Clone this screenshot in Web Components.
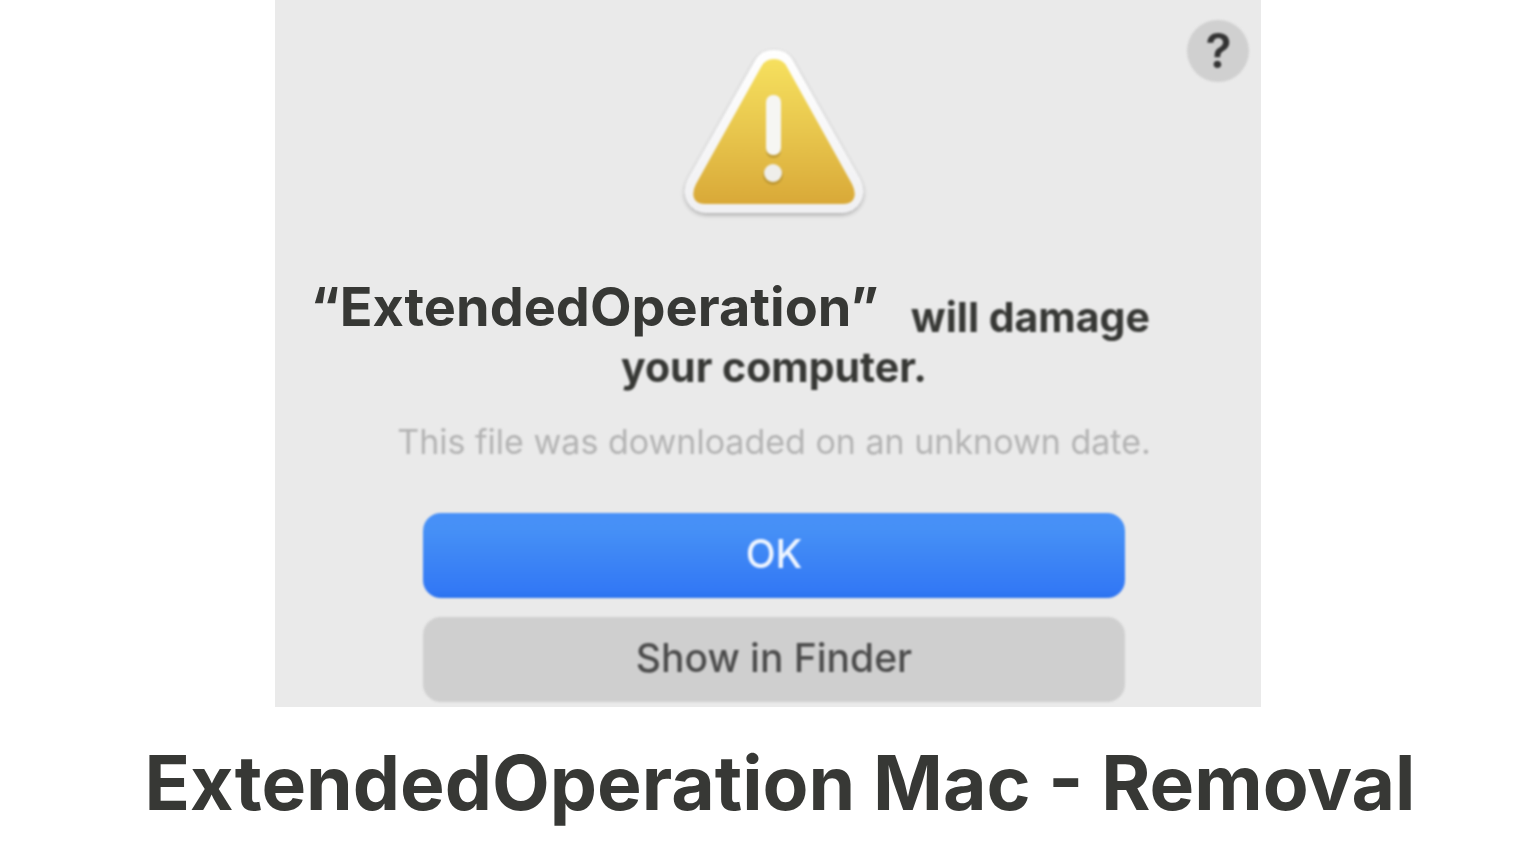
<!DOCTYPE html>
<html lang="en">
<head>
<meta charset="utf-8">
<meta name="viewport" content="width=device-width, initial-scale=1">
<title>ExtendedOperation Mac - Removal</title>
<style>
  body {
    margin: 0;
    background: #fff;
    color: #373835;
    font-family: Inter, "Liberation Sans", sans-serif;
  }
</style>
</head>
<body>
<removal-cover>
  <mac-alert slot="picture">
    <span slot="name">“ExtendedOperation”</span>
    <span slot="claim">will damage</span>
    <span slot="claim-end">your computer.</span>
    <span slot="detail">This file was downloaded on an unknown date.</span>
    <push-button slot="actions" primary>OK</push-button>
    <push-button slot="actions">Show in Finder</push-button>
  </mac-alert>
  ExtendedOperation Mac - Removal
</removal-cover>

<script>
class RemovalCover extends HTMLElement {
  constructor() {
    super();
    this.attachShadow({ mode: 'open' }).innerHTML = `
      <style>
        :host {
          display: flex;
          flex-direction: column;
          align-items: center;
        }
        ::slotted(mac-alert) {
          width: 64.25%;
        }
        h1 {
          margin: 0;
          padding: 28px 0 0 24px;
          font-size: 75px;
          line-height: 96px;
          font-weight: 700;
          white-space: nowrap;
        }
      </style>
      <slot name="picture"></slot>
      <h1><slot></slot></h1>
    `;
  }
}

class MacAlert extends HTMLElement {
  constructor() {
    super();
    this.attachShadow({ mode: 'open' }).innerHTML = `
      <style>
        :host {
          display: flex;
          flex-direction: column;
          align-items: center;
          position: relative;
          box-sizing: border-box;
          padding: 45px 0 5px 12px;
          background: #eaeaea;
        }
        help-button {
          position: absolute;
          top: 20px;
          right: 12px;
        }
        h2 {
          display: flex;
          flex-direction: column;
          align-self: stretch;
          margin: 51px 0 0;
          font-size: 41px;
          line-height: 50px;
          font-weight: 700;
          white-space: nowrap;
        }
        .first {
          display: flex;
          align-items: flex-end;
          gap: 32px;
          padding-left: 24px;
        }
        .name {
          font-size: 54px;
          line-height: 70px;
        }
        .last {
          align-self: center;
        }
        .soft {
          filter: blur(1px);
        }
        p {
          margin: 26px 0 0;
          color: #b3b3b3;
          font-size: 34px;
          line-height: 48px;
          white-space: nowrap;
        }
        .actions {
          display: flex;
          flex-direction: column;
          gap: 19px;
          width: 72%;
          margin-top: 47px;
        }
      </style>
      <help-button></help-button>
      <warning-icon></warning-icon>
      <h2>
        <span class="first">
          <span class="name"><slot name="name"></slot></span>
          <span class="soft"><slot name="claim"></slot></span>
        </span>
        <span class="last soft"><slot name="claim-end"></slot></span>
      </h2>
      <p class="soft"><slot name="detail"></slot></p>
      <div class="actions"><slot name="actions"></slot></div>
    `;
  }
}

class WarningIcon extends HTMLElement {
  constructor() {
    super();
    this.attachShadow({ mode: 'open' }).innerHTML = `
      <style>
        :host { display: block; }
        svg {
          display: block;
          filter: blur(1px);
        }
      </style>
      <svg width="190" height="176" viewBox="0 0 190 176" role="img" aria-label="Warning">
        <defs>
          <linearGradient id="edge" x1="0" y1="0" x2="0" y2="1">
            <stop offset="0" stop-color="#fff"/>
            <stop offset="1" stop-color="#f0f0f2"/>
          </linearGradient>
          <linearGradient id="fill" x1="0" y1="0" x2="0" y2="1">
            <stop offset="0" stop-color="#f6e05e"/>
            <stop offset="0.5" stop-color="#e8c64d"/>
            <stop offset="1" stop-color="#d9a938"/>
          </linearGradient>
          <filter id="drop" x="-10%" y="-10%" width="120%" height="120%">
            <feDropShadow dx="0" dy="2" stdDeviation="2" flood-color="#000" flood-opacity="0.28"/>
          </filter>
        </defs>
        <path fill="url(#edge)" filter="url(#drop)" d="M77 14 Q83 5 95 5 Q107 5 113 14 L181 134 Q187 146 182 156 Q176 167 163 168 H27 Q14 167 8 156 Q3 146 9 134 Z"/>
        <path fill="url(#fill)" d="M82 22 Q86 14 95 14 Q104 14 108 22 L173 139 Q178 149 174 155 Q171 159 164 159 H26 Q19 159 16 155 Q12 149 17 139 Z"/>
        <rect x="87" y="53" width="15" height="60" rx="7" fill="#9b7a24" opacity="0.45"/>
        <circle cx="94" cy="130" r="10" fill="#9b7a24" opacity="0.45"/>
        <rect x="87" y="50" width="15" height="60" rx="7" fill="#f6f6f3"/>
        <circle cx="94" cy="128" r="9" fill="#efeeea"/>
      </svg>
    `;
  }
}

class HelpButton extends HTMLElement {
  constructor() {
    super();
    this.attachShadow({ mode: 'open' }).innerHTML = `
      <style>
        :host { display: block; }
        button {
          display: block;
          width: 62px;
          height: 62px;
          padding: 0;
          border: 0;
          border-radius: 50%;
          background: #d0d0d0;
          color: #333;
          font: 600 48px/62px Inter, "Liberation Sans", sans-serif;
          filter: blur(1px);
        }
      </style>
      <button type="button" title="Help">?</button>
    `;
  }
}

class PushButton extends HTMLElement {
  constructor() {
    super();
    this.attachShadow({ mode: 'open' }).innerHTML = `
      <style>
        :host { display: block; }
        button {
          display: block;
          width: 100%;
          height: 85px;
          padding: 0 0 4px;
          border: 0;
          border-radius: 18px;
          background: #cfcfcf;
          color: #4c4c4c;
          font: 500 39px/80px Inter, "Liberation Sans", sans-serif;
          filter: blur(1px);
        }
        :host([primary]) button {
          background: linear-gradient(#4890f8, #4690f6 20%, #3379f5 90%, #2b72ef);
          color: #eef5ff;
        }
      </style>
      <button type="button"><slot></slot></button>
    `;
  }
}

customElements.define('warning-icon', WarningIcon);
customElements.define('help-button', HelpButton);
customElements.define('push-button', PushButton);
customElements.define('mac-alert', MacAlert);
customElements.define('removal-cover', RemovalCover);
</script>
</body>
</html>
